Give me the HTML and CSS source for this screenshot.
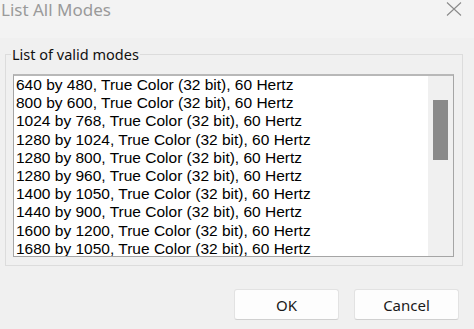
FILE: index.html
```html
<!DOCTYPE html>
<html lang="en">
<head>
    <meta charset="UTF-8">
    <meta name="viewport" content="width=device-width, initial-scale=1.0">
    <title>List All Modes</title>
    <link rel="stylesheet" href="styles.css">
</head>
<body>
    <div class="dialog">
        <div class="titlebar">
            <span class="title">List All Modes</span>
            <svg class="close" width="16" height="14" viewBox="0 0 16 14">
                <path d="M1 0.5 L15 13.5 M15 0.5 L1 13.5" stroke="#8a8a8a" stroke-width="1.1" fill="none"/>
            </svg>
        </div>

        <fieldset class="group">
            <legend>List of valid modes</legend>
            <div class="listbox">
                <ul class="modes">
                    <li>640 by 480, True Color (32 bit), 60 Hertz</li>
                    <li>800 by 600, True Color (32 bit), 60 Hertz</li>
                    <li>1024 by 768, True Color (32 bit), 60 Hertz</li>
                    <li>1280 by 1024, True Color (32 bit), 60 Hertz</li>
                    <li>1280 by 800, True Color (32 bit), 60 Hertz</li>
                    <li>1280 by 960, True Color (32 bit), 60 Hertz</li>
                    <li>1400 by 1050, True Color (32 bit), 60 Hertz</li>
                    <li>1440 by 900, True Color (32 bit), 60 Hertz</li>
                    <li>1600 by 1200, True Color (32 bit), 60 Hertz</li>
                    <li>1680 by 1050, True Color (32 bit), 60 Hertz</li>
                </ul>
                <div class="scrollbar">
                    <div class="thumb"></div>
                </div>
            </div>
        </fieldset>

        <div class="buttons">
            <button type="button">OK</button>
            <button type="button">Cancel</button>
        </div>
    </div>
</body>
</html>
```

FILE: styles.css
```css
* {
    margin: 0;
    padding: 0;
    box-sizing: border-box;
}

body {
    background-color: #f0f0f0;
    font-family: "Noto Sans", "Open Sans", sans-serif;
    width: 474px;
    height: 329px;
    overflow: hidden;
}

.dialog {
    height: 329px;
}

.titlebar {
    height: 38px;
    display: flex;
    align-items: flex-start;
    justify-content: space-between;
    background: #f3f3f3;
    padding: 0 12px 0 1px;
}

.title {
    font-size: 17px;
    color: #9a9a9a;
    line-height: 20px;
}

.close {
    margin-top: 2px;
}

.group {
    margin: 6px 11px 0 5px;
    border: 1px solid #dcdcdc;
    height: 222px;
    padding: 0 8px 0 7px;
}

.group legend {
    font-size: 14.5px;
    color: #111;
    padding: 0 1px;
    margin-left: -2px;
    line-height: 20px;
}

.listbox {
    display: flex;
    margin-top: 10px;
    height: 183px;
    background: #fff;
    border: 1px solid #a5a5a5;
    border-top: 2px solid #b8b8b8;
}

.modes {
    list-style: none;
    flex: 1;
    padding: 0 0 0 2px;
    font-family: "Liberation Sans", Arial, sans-serif;
    font-size: 15.5px;
    line-height: 18.2px;
    color: #000;
    overflow: hidden;
}

.scrollbar {
    width: 25px;
    background: #f0f0f0;
    padding: 24px 5px 0 5px;
}

.thumb {
    height: 60px;
    background: #8a8a8a;
}

.buttons {
    display: flex;
    justify-content: flex-end;
    gap: 15px;
    padding: 0 15px 0 0;
    margin-top: 23px;
}

.buttons button {
    width: 105px;
    height: 31px;
    background: #fdfdfd;
    border: 1px solid #e2e2e2;
    border-bottom-color: #d0d0d0;
    border-radius: 3px;
    font-family: "Noto Sans", "Open Sans", sans-serif;
    font-size: 15px;
    color: #1a1a1a;
}
```
